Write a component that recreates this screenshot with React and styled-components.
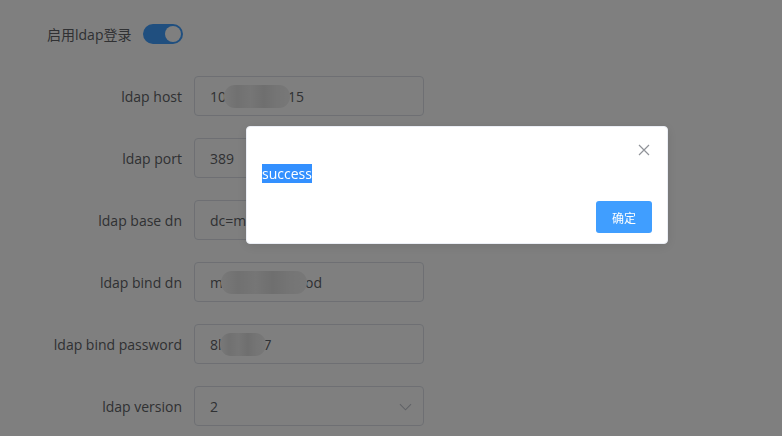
import React from 'react';
import styled, { createGlobalStyle } from 'styled-components';

const GlobalStyle = createGlobalStyle`
  html, body {
    margin: 0;
    padding: 0;
    background: #fff;
    font-family: "Open Sans", "Noto Sans CJK SC", sans-serif;
    font-size: 14px;
    color: #606266;
  }
`;

const fields = [
  { label: 'ldap host', parts: ['10', 66, '15'] },
  { label: 'ldap port', parts: ['389'] },
  { label: 'ldap base dn', parts: ['dc=mycompany,dc=com'] },
  { label: 'ldap bind dn', parts: ['m', 86, 'od'] },
  { label: 'ldap bind password', parts: ['8l', 46, '7'] },
];

function App() {
  return (
    <>
      <GlobalStyle />
      <Page>
        <SwitchRow>
          <SwitchLabel>启用ldap登录</SwitchLabel>
          <Switch>
            <Knob />
          </Switch>
        </SwitchRow>
        {fields.map((f) => (
          <FormItem key={f.label}>
            <Label>{f.label}</Label>
            <Input>
              {f.parts.map((p, i) =>
                typeof p === 'number' ? (
                  <Blur key={i} style={{ width: p }} />
                ) : (
                  <span key={i}>{p}</span>
                )
              )}
            </Input>
          </FormItem>
        ))}
        <FormItem>
          <Label>ldap version</Label>
          <Input>
            <span>2</span>
            <Chevron viewBox="0 0 14 8" width="13" height="8">
              <path d="M1 1l6 6 6-6" fill="none" stroke="#c0c4cc" strokeWidth="1.2" />
            </Chevron>
          </Input>
        </FormItem>
      </Page>
      <Mask />
      <MessageBox>
        <Header>
          <Close viewBox="0 0 12 12" width="12" height="12">
            <path d="M1 1l10 10M11 1L1 11" stroke="#909399" strokeWidth="1.2" fill="none" />
          </Close>
        </Header>
        <Content>
          <Selected>success</Selected>
        </Content>
        <Buttons>
          <Primary>确定</Primary>
        </Buttons>
      </MessageBox>
    </>
  );
}
export default App;

const Page = styled.div`
  padding: 14px 0 0 0;
  display: flex;
  flex-direction: column;
  gap: 22px;
`;

const SwitchRow = styled.div`
  display: flex;
  align-items: center;
  height: 40px;
  padding-left: 47px;
`;

const SwitchLabel = styled.span`
  padding-right: 12px;
  color: #606266;
`;

const Switch = styled.span`
  position: relative;
  width: 40px;
  height: 20px;
  border-radius: 10px;
  background: #409eff;
`;

const Knob = styled.span`
  position: absolute;
  top: 2px;
  left: 22px;
  width: 16px;
  height: 16px;
  border-radius: 50%;
  background: #fff;
`;

const FormItem = styled.div`
  display: flex;
  align-items: center;
  height: 40px;
`;

const Label = styled.label`
  flex: 0 0 194px;
  box-sizing: border-box;
  padding-right: 12px;
  text-align: right;
  color: #606266;
`;

const Input = styled.div`
  position: relative;
  display: flex;
  align-items: center;
  box-sizing: border-box;
  width: 230px;
  height: 40px;
  padding: 0 15px;
  border: 1px solid #dcdfe6;
  border-radius: 4px;
  color: #606266;
  white-space: nowrap;
  overflow: hidden;
`;

const Blur = styled.span`
  display: inline-block;
  height: 23px;
  margin: 0 -2px;
  border-radius: 11px;
  background: linear-gradient(90deg, #f2f2f2 0%, #e2e2e2 20%, #ececec 40%, #dedede 60%, #eaeaea 80%, #f0f0f0 100%);
  filter: blur(0.5px);
`;

const Chevron = styled.svg`
  position: absolute;
  right: 11px;
  top: 16px;
`;

const Mask = styled.div`
  position: fixed;
  inset: 0;
  background: rgba(0, 0, 0, 0.5);
`;

const MessageBox = styled.div`
  position: fixed;
  left: 246px;
  top: 126px;
  width: 422px;
  box-sizing: border-box;
  padding-bottom: 10px;
  background: #fff;
  border: 1px solid #ebeef5;
  border-radius: 4px;
  box-shadow: 0 2px 12px rgba(0, 0, 0, 0.1);
`;

const Header = styled.div`
  position: relative;
  padding: 15px 15px 10px;
`;

const Close = styled.svg`
  position: absolute;
  top: 17px;
  right: 17px;
`;

const Content = styled.div`
  padding: 10px 15px;
  line-height: 24px;
  color: #606266;
`;

const Selected = styled.span`
  background: #3390ff;
  color: #fff;
`;

const Buttons = styled.div`
  padding: 5px 15px 0;
  display: flex;
  justify-content: flex-end;
`;

const Primary = styled.button`
  width: 56px;
  height: 32px;
  border: none;
  border-radius: 3px;
  background: #409eff;
  color: #fff;
  font-family: "Noto Sans CJK SC", sans-serif;
  font-size: 12px;
  padding: 0;
`;
